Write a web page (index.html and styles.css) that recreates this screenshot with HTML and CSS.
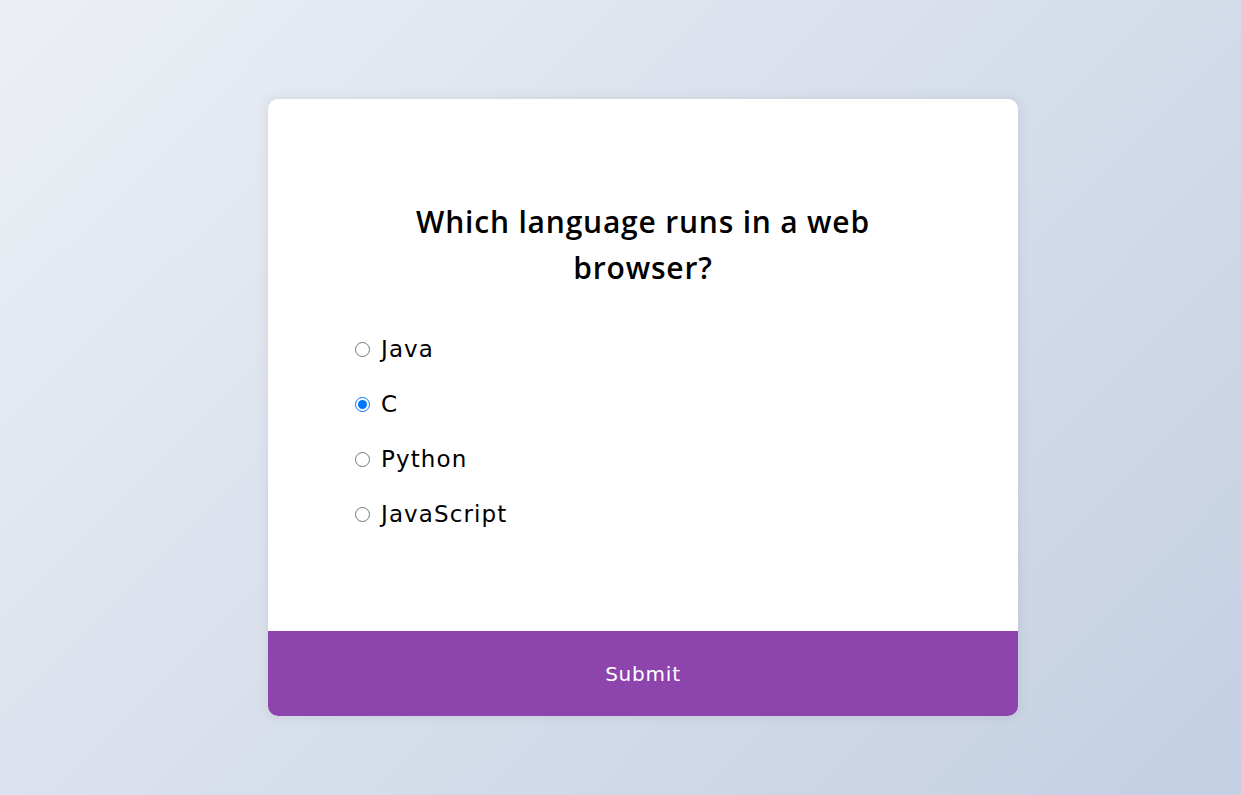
FILE: index.html
```html
<!DOCTYPE html>
<html lang="en">
<head>
    <meta charset="UTF-8">
    <meta name="viewport" content="width=device-width, initial-scale=1.0">
    <title>Quiz</title>
    <link rel="stylesheet" href="styles.css">
</head>
<body>
    <div class="quiz-container">
        <div class="quiz-header">
            <h2 class="question">Which language runs in a web browser?</h2>
            <ul class="answers">
                <li><label><input type="radio" name="answer" value="a"> Java</label></li>
                <li><label><input type="radio" name="answer" value="b" checked> C</label></li>
                <li><label><input type="radio" name="answer" value="c"> Python</label></li>
                <li><label><input type="radio" name="answer" value="d"> JavaScript</label></li>
            </ul>
        </div>
        <button class="submit-btn">Submit</button>
    </div>
</body>
</html>
```

FILE: styles.css
```css
* {
    box-sizing: border-box;
}
body {
    font-family: "DejaVu Sans", "Open Sans", sans-serif;
    background-color: #c3cfe2;
    background-image: linear-gradient(135deg, #eceff5 0%, #c3cfe2 100%);
    margin: 0;
    padding: 20px 0 0 45px;
    height: 100vh;
    display: flex;
    align-items: center;
    justify-content: center;
    overflow: hidden;
}
.quiz-container {
    background-color: #fff;
    width: 750px;
    border-radius: 10px;
    box-shadow: 0 0 10px 2px rgba(100, 100, 100, 0.1);
    overflow: hidden;
}
.quiz-header {
    padding: 64px 82px 64px;
}
.question {
    margin: 0 auto;
    padding-top: 36px;
    max-width: 500px;
    font-family: "Open Sans", sans-serif;
    font-size: 30px;
    font-weight: 600;
    letter-spacing: 0.8px;
    line-height: 46px;
    text-align: center;
    color: #000;
}
.answers {
    list-style: none;
    margin: 42px 0 36px;
    padding: 0;
}
.answers li {
    font-size: 23px;
    letter-spacing: 1.1px;
    line-height: 33px;
    margin-bottom: 22px;
}
.answers li:last-child {
    margin-bottom: 0;
}
.answers label {
    display: flex;
    align-items: center;
    gap: 11px;
    cursor: pointer;
}
.answers input {
    margin: 0 0 0 5px;
    width: 15px;
    height: 15px;
}
.submit-btn {
    display: block;
    width: 100%;
    border: none;
    background-color: #8e44ad;
    color: #fff;
    font-family: inherit;
    font-size: 20px;
    letter-spacing: 0.8px;
    line-height: 30px;
    padding: 27.5px;
    cursor: pointer;
}
```
